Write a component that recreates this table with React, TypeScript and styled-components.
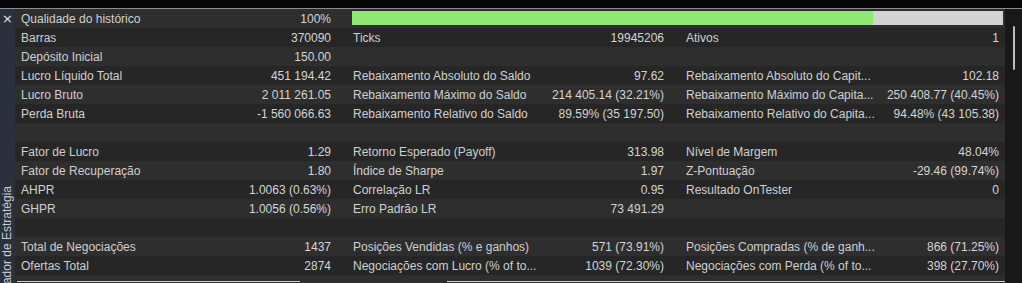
import React from "react";
import styled, { createGlobalStyle } from "styled-components";

const GlobalStyle = createGlobalStyle`
    html, body {
        margin: 0;
        padding: 0;
        background: #070707;
        overflow: hidden;
    }
    * {
        box-sizing: border-box;
    }
`;

type Cell = [string, string] | null;

interface RowData {
    cells: [Cell, Cell, Cell];
}

const rows: RowData[] = [
    { cells: [["Barras", "370090"], ["Ticks", "19945206"], ["Ativos", "1"]] },
    { cells: [["Depósito Inicial", "150.00"], null, null] },
    { cells: [["Lucro Líquido Total", "451 194.42"], ["Rebaixamento Absoluto do Saldo", "97.62"], ["Rebaixamento Absoluto do Capit...", "102.18"]] },
    { cells: [["Lucro Bruto", "2 011 261.05"], ["Rebaixamento Máximo do Saldo", "214 405.14 (32.21%)"], ["Rebaixamento Máximo do Capita...", "250 408.77 (40.45%)"]] },
    { cells: [["Perda Bruta", "-1 560 066.63"], ["Rebaixamento Relativo do Saldo", "89.59% (35 197.50)"], ["Rebaixamento Relativo do Capita...", "94.48% (43 105.38)"]] },
    { cells: [null, null, null] },
    { cells: [["Fator de Lucro", "1.29"], ["Retorno Esperado (Payoff)", "313.98"], ["Nível de Margem", "48.04%"]] },
    { cells: [["Fator de Recuperação", "1.80"], ["Índice de Sharpe", "1.97"], ["Z-Pontuação", "-29.46 (99.74%)"]] },
    { cells: [["AHPR", "1.0063 (0.63%)"], ["Correlação LR", "0.95"], ["Resultado OnTester", "0"]] },
    { cells: [["GHPR", "1.0056 (0.56%)"], ["Erro Padrão LR", "73 491.29"], null] },
    { cells: [null, null, null] },
    { cells: [["Total de Negociações", "1437"], ["Posições Vendidas (% e ganhos)", "571 (73.91%)"], ["Posições Compradas (% de ganh...", "866 (71.25%)"]] },
    { cells: [["Ofertas Total", "2874"], ["Negociações com Lucro (% of to...", "1039 (72.30%)"], ["Negociações com Perda (% of to...", "398 (27.70%)"]] },
];

const partialRow: RowData = {
    cells: [["", ""], ["Lucro médio da negociação", "2 000.79"], ["Maior negociação com perda", "-9 000.48"]],
};

const Frame = styled.div`
    position: relative;
    width: 1022px;
    height: 283px;
    display: flex;
    flex-direction: column;
    overflow: hidden;
    font-family: "Liberation Sans", Arial, sans-serif;
    font-size: 12px;
    color: #d2d2d2;
`;

const TopStrip = styled.div`
    height: 8px;
    background: #070707;
    flex-shrink: 0;
`;

const Divider = styled.div`
    height: 1px;
    background: #8c8c8c;
    flex-shrink: 0;
`;

const Body = styled.div`
    flex: 1;
    display: flex;
    min-height: 0;
`;

const Sidebar = styled.div`
    width: 15px;
    flex-shrink: 0;
    background: #2b303d;
    display: flex;
    flex-direction: column;
    align-items: center;
    overflow: hidden;
`;

const CloseMark = styled.div`
    height: 20px;
    line-height: 20px;
    font-size: 13px;
    color: #e8e8e8;
    font-family: "DejaVu Sans", sans-serif;
`;

const VerticalTitle = styled.div`
    margin-top: 156px;
    writing-mode: vertical-rl;
    transform: rotate(180deg);
    white-space: nowrap;
    font-size: 12px;
    line-height: 15px;
    color: #c9ccd4;
    padding-bottom: 1px;
`;

const Table = styled.div`
    width: 990px;
    flex-shrink: 0;
    display: flex;
    flex-direction: column;
`;

const Row = styled.div<{ $light: boolean; $partial?: boolean }>`
    height: 19px;
    flex-shrink: 0;
    display: grid;
    grid-template-columns: 322px 323px 325px;
    column-gap: 10px;
    padding-top: ${({ $partial }) => ($partial ? "8px" : "0")};
    background: ${({ $light }) => ($light ? "#2e2e2e" : "#262626")};
`;

const CellBox = styled.div`
    display: flex;
    justify-content: space-between;
    align-items: center;
    padding: 0 6px;
    white-space: nowrap;
    overflow: hidden;
`;

const Label = styled.span`
    color: #d0d0d0;
`;

const Value = styled.span`
    color: #d4d4d4;
`;

const BarCell = styled.div`
    grid-column: 2 / 4;
    padding: 2px 2px 3px 5px;
    display: flex;
`;

const Bar = styled.div`
    flex: 1;
    display: flex;
    background: #d3d3d3;
`;

const BarFill = styled.div`
    height: 100%;
    background: #8fe872;
`;

const RightGutter = styled.div`
    flex: 1;
    background: #181818;
    display: flex;
    justify-content: center;
    padding-left: 1px;
`;

const ScrollThumb = styled.div`
    margin-top: 17px;
    width: 2px;
    height: 44px;
    background: #bdbdbd;
    border-radius: 1px;
`;

const EdgeLine = styled.div<{ $left: number; $width: number }>`
    position: absolute;
    top: 281px;
    left: ${({ $left }) => $left}px;
    width: ${({ $width }) => $width}px;
    height: 1px;
    background: #cfcfcf;
`;

function StatCell({ cell }: { cell: Cell }) {
    if (!cell) return <CellBox />;
    return (
        <CellBox>
            <Label>{cell[0]}</Label>
            <Value>{cell[1]}</Value>
        </CellBox>
    );
}

export default function App() {
    const quality = 80;
    return (
        <>
            <GlobalStyle />
            <Frame>
                <TopStrip />
                <Divider />
                <Body>
                    <Sidebar>
                        <CloseMark>×</CloseMark>
                        <VerticalTitle>Testador de Estratégia</VerticalTitle>
                    </Sidebar>
                    <Table>
                        <Row $light>
                            <StatCell cell={["Qualidade do histórico", "100%"]} />
                            <BarCell>
                                <Bar>
                                    <BarFill style={{ width: `${quality}%` }} />
                                </Bar>
                            </BarCell>
                        </Row>
                        {rows.map((r, i) => (
                            <Row key={i} $light={i % 2 === 1}>
                                {r.cells.map((c, j) => (
                                    <StatCell key={j} cell={c} />
                                ))}
                            </Row>
                        ))}
                        <Row $light $partial>
                            {partialRow.cells.map((c, j) => (
                                <StatCell key={j} cell={c} />
                            ))}
                        </Row>
                    </Table>
                    <RightGutter>
                        <ScrollThumb />
                    </RightGutter>
                </Body>
                <EdgeLine $left={17} $width={283} />
                <EdgeLine $left={447} $width={558} />
            </Frame>
        </>
    );
}
